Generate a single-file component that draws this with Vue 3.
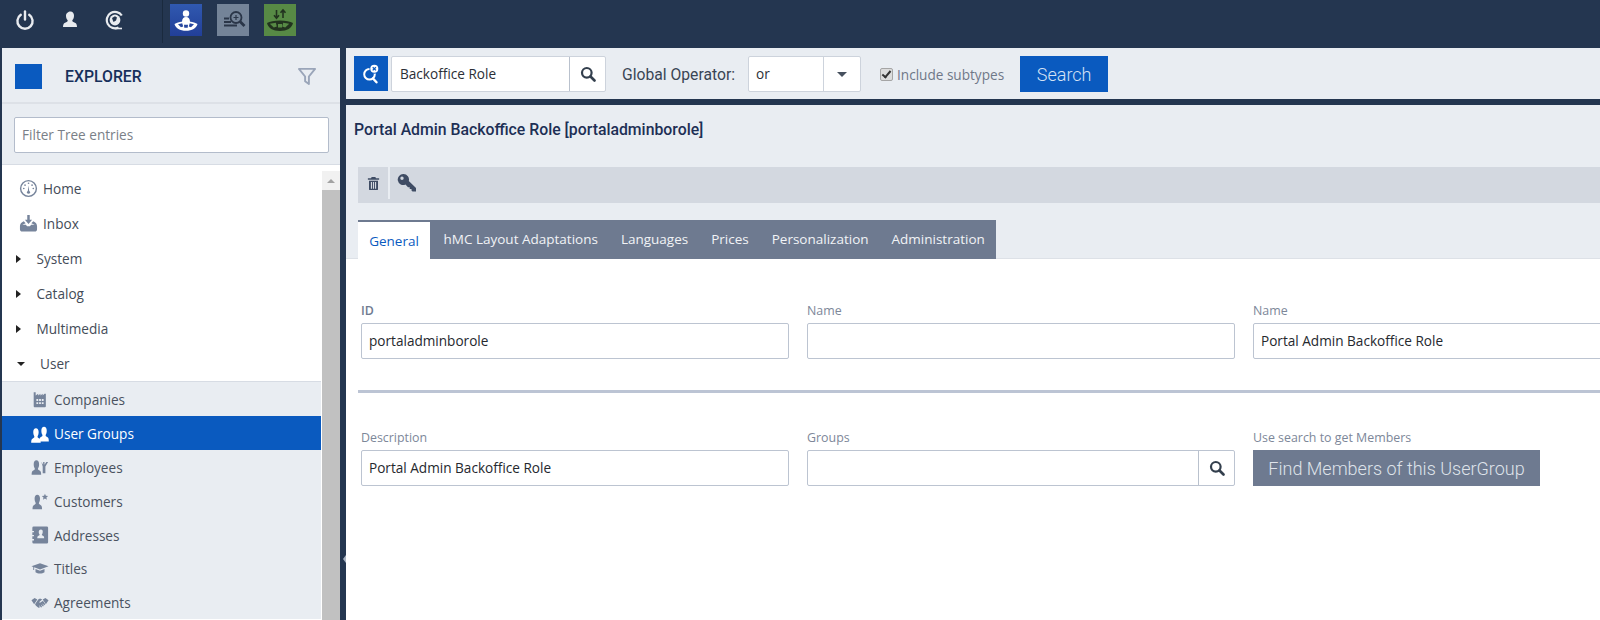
<template>
  <div class="page">
    <header class="topbar">
      <div class="top-actions">
        <svg class="top-icon" viewBox="0 0 20 20" fill="none" stroke="#e8ebef" stroke-width="2.4" stroke-linecap="round">
          <path d="M5.800 4.800a7.600 7.600 0 1 0 8.400 0" />
          <path d="M10 1.500v8" />
        </svg>
        <svg class="top-icon" viewBox="0 0 20 20" fill="#e8ebef">
          <path d="M10.500 1.500c2.200 0 3.500 1.700 3.500 4 0 2-.6 3.500-1.500 4.600-.4.500-.2 1.300.4 1.600l2.500 1.200c1 .5 1.600 2 1.600 4.100H3c0-2.100.6-3.600 1.600-4.100l2.500-1.200c.6-.3.800-1.100.4-1.600C6.600 9 6 7.500 6 5.500c0-2.300 2.300-4 4.500-4z" />
        </svg>
        <svg class="top-icon" viewBox="0 0 20 20" fill="none" stroke="#e8ebef">
          <path d="M14.500 17.500A8.200 8.200 0 1 1 17.800 5.500" stroke-width="2.200" />
          <circle cx="11" cy="10" r="5.400" fill="#e8ebef" stroke="none" />
          <path d="M8 8l3-1.800 2 1.300-1 3-2.500 1.500-.8-2z" fill="#243650" stroke="none" />
          <path d="M11 18.500h7" stroke-width="1.600" />
        </svg>
      </div>
      <div class="perspectives">
        <button class="persp persp-blue">
          <svg viewBox="0 0 32 32" fill="#fff">
            <circle cx="16" cy="9.500" r="3.200" />
            <path d="M12 18c0-3.500 1.500-5 4-5s4 1.500 4 5z" />
            <path d="M4.500 20c3.500-2 7-2.800 11.500-2.800s8 .8 11.500 2.800c-1 4.200-5.500 6.800-11.500 6.800S5.500 24.200 4.500 20zm3.500.3l3 3 2.200-.8-1-3.200zm6 .5l.3 2.900h3.400l.3-2.900zm5.800-1.500l-1 3.200 2.200.8 3-3z" fill-rule="evenodd" />
          </svg>
        </button>
        <button class="persp persp-grey">
          <svg viewBox="0 0 32 32" fill="none" stroke="#2a3648" stroke-width="1.800">
            <circle cx="19" cy="13.500" r="5.500" />
            <path d="M23 17.500l4.500 4.500" stroke-width="2.800" />
            <path d="M16.500 13.500h5M19 11v5" stroke-width="1.200" />
            <path d="M7 14.500h5M7 18h7M7 21.500h13" stroke-width="2" />
          </svg>
        </button>
        <button class="persp persp-green">
          <svg viewBox="0 0 32 32" fill="#22331f">
            <path d="M3 19c3-1.500 7-2.500 13-2.500s10 1 13 2.500c-1 5-6 8-13 8S4 24 3 19zm2.800.8l4 3.700 3-1-1-3.800zm8.200.2v3.500h4V20zm5.200-1.300l-1 3.800 3 1 4-3.700z" fill-rule="evenodd" />
            <path d="M12.500 6v8M10 11.300l2.500 2.900 2.500-2.900M19 14V6M16.500 8.800L19 6l2.500 2.800" fill="none" stroke="#22331f" stroke-width="1.600" />
          </svg>
        </button>
      </div>
    </header>

    <div class="workspace">
      <aside class="sidebar">
        <div class="explorer-head">
          <span class="explorer-logo"></span>
          <span class="explorer-title">EXPLORER</span>
          <svg class="funnel" viewBox="0 0 20 20" fill="none" stroke="#9aa5b9" stroke-width="2" stroke-linejoin="round">
            <path d="M1.500 2h17l-6.500 8v8l-4-3v-5z" />
          </svg>
        </div>
        <div class="filter-row">
          <div class="filter-input">Filter Tree entries</div>
        </div>
        <div class="tree-area">
          <div class="tree">
            <div class="tree-row top-row">
              <svg class="row-icon" viewBox="0 0 20 20" fill="none" stroke="#76849b">
                <circle cx="10" cy="10" r="8.300" stroke-width="1.500" />
                <path d="M10 6.500l.8 7H9.200z" fill="#76849b" stroke="none" />
                <circle cx="10" cy="14" r="1.600" fill="#76849b" stroke="none" />
                <path d="M5 10h.1M6.300 6.500h.1M10 4.500h.1M13.700 6.500h.1M15 10h.1" stroke-width="1.700" stroke-linecap="round" />
              </svg>
              <span>Home</span>
            </div>
            <div class="tree-row top-row">
              <svg class="row-icon" viewBox="0 0 20 20" fill="#76849b">
                <path d="M8.700 1h2.600v5h2.500L10 10.500 6.200 6h2.500z" />
                <path d="M5 7.500l2 2.200-3.500 1.600h3.700L8.500 13h3l1.300-1.700h3.700L13 9.700l2-2.200c2.700 1 4 3 4 5.500v3c0 1.500-1 2.500-2.500 2.500h-13C2 18.500 1 17.500 1 16v-3c0-2.500 1.300-4.500 4-5.500z" />
              </svg>
              <span>Inbox</span>
            </div>
            <div v-for="item in closedNodes" :key="item" class="tree-row node-row">
              <span class="caret-right"></span>
              <span>{{ item }}</span>
            </div>
            <div class="tree-row node-row open-row">
              <span class="caret-down"></span>
              <span>User</span>
            </div>
            <div class="sub-list">
              <div
                v-for="item in userItems"
                :key="item.label"
                class="sub-row"
                :class="{ selected: item.selected }"
              >
                <svg class="sub-icon" viewBox="0 0 20 20" v-html="item.icon"></svg>
                <span>{{ item.label }}</span>
              </div>
            </div>
          </div>
          <div class="scrollbar">
            <div class="scroll-up"><span></span></div>
            <div class="scroll-thumb"></div>
          </div>
        </div>
      </aside>

      <main class="main">
        <div class="searchbar">
          <button class="search-mode">
            <svg viewBox="0 0 20 20" fill="none" stroke="#fff">
              <circle cx="8.500" cy="10.200" r="5.300" stroke-width="2" />
              <path d="M12 14.500l3.500 3.800" stroke-width="2.400" stroke-linecap="round" />
              <circle cx="13.300" cy="4.800" r="4.900" fill="#0a5abf" stroke="none" />
              <circle cx="13.300" cy="4.800" r="4" fill="#fff" stroke="none" />
              <path d="M11.700 3.200l3.200 3.200M14.900 3.200l-3.200 3.200" stroke="#0a5abf" stroke-width="1.300" />
            </svg>
          </button>
          <div class="search-box">
            <span class="search-text">Backoffice Role</span>
            <span class="addon">
              <svg class="glass" viewBox="0 0 16 16" fill="none" stroke="#333f4d">
                <circle cx="6.800" cy="6.800" r="4.800" stroke-width="2.200" />
                <path d="M10.500 10.500l4 4" stroke-width="2.600" stroke-linecap="round" />
              </svg>
            </span>
          </div>
          <span class="operator-label">Global Operator:</span>
          <div class="operator-select">
            <span class="operator-value">or</span>
            <span class="operator-arrow"><span></span></span>
          </div>
          <label class="subtypes">
            <input type="checkbox" checked />
            <span>Include subtypes</span>
          </label>
          <button class="search-btn">Search</button>
        </div>

        <div class="editor">
          <div class="editor-head">
            <h1 class="editor-title">Portal Admin Backoffice Role [portaladminborole]</h1>
            <div class="toolbar">
              <button class="tool-btn">
                <svg viewBox="0 0 16 16" fill="#3f4c64" width="15" height="15">
                  <path d="M6 1h4l.6 1.500H14V4H2V2.500h3.400z" />
                  <path d="M3.200 5h9.600v9a1 1 0 0 1-1 1H4.200a1 1 0 0 1-1-1zm2 1.500v7h1.200v-7zm2.200 0v7h1.200v-7zm2.200 0v7h1.200v-7z" fill-rule="evenodd" />
                </svg>
              </button>
              <button class="tool-btn key-btn">
                <svg viewBox="0 0 20 20" fill="#3f4c64" width="20" height="20">
                  <path d="M6.500 1a5.500 5.500 0 0 1 5.300 7l7.200 7v3.500h-3.500l-1-1v-1.500h-1.800v-1.800h-1.700L8.500 11.500A5.500 5.500 0 1 1 6.500 1zM5 3.500a1.700 1.700 0 1 0 0 3.400 1.700 1.700 0 0 0 0-3.400z" fill-rule="evenodd" />
                </svg>
              </button>
            </div>
          </div>
          <div class="tabs-wrap">
            <div class="tabs">
              <span v-for="tab in tabs" :key="tab" class="tab" :class="{ active: tab === 'General' }">{{ tab }}</span>
            </div>
          </div>

          <div class="form">
            <div class="form-grid">
              <label class="field">
                <span class="field-label strong">ID</span>
                <span class="field-input">portaladminborole</span>
              </label>
              <label class="field">
                <span class="field-label">Name</span>
                <span class="field-input"></span>
              </label>
              <label class="field">
                <span class="field-label">Name</span>
                <span class="field-input">Portal Admin Backoffice Role</span>
              </label>
            </div>
            <div class="divider"></div>
            <div class="form-grid">
              <label class="field">
                <span class="field-label">Description</span>
                <span class="field-input">Portal Admin Backoffice Role</span>
              </label>
              <label class="field">
                <span class="field-label">Groups</span>
                <span class="field-input with-addon">
                  <span class="addon">
                    <svg class="glass" viewBox="0 0 16 16" fill="none" stroke="#333f4d">
                      <circle cx="6.800" cy="6.800" r="4.800" stroke-width="2.200" />
                      <path d="M10.500 10.500l4 4" stroke-width="2.600" stroke-linecap="round" />
                    </svg>
                  </span>
                </span>
              </label>
              <div class="field">
                <span class="field-label">Use search to get Members</span>
                <button class="find-btn">Find Members of this UserGroup</button>
              </div>
            </div>
          </div>
          <span class="collapse-handle"></span>
        </div>
      </main>
    </div>
  </div>
</template>

<script setup>
const closedNodes = ['System', 'Catalog', 'Multimedia'];

const tabs = ['General', 'hMC Layout Adaptations', 'Languages', 'Prices', 'Personalization', 'Administration'];

// same silhouette used by the people icons
const person = 'M6 2.500c1.800 0 3 1.500 3 3.600 0 1.700-.5 3-1.100 3.800-.3.400-.2 1 .2 1.300l1.800 1c1 .5 1.400 1.500 1.400 3.800H.7c0-2.300.4-3.300 1.400-3.800l1.800-1c.4-.3.500-.9.2-1.300C3.500 9.100 3 7.800 3 6.100 3 4 4.200 2.500 6 2.500z';

const userItems = [
  {
    label: 'Companies',
    icon: '<path d="M3 1.500h2.200v3.500l2.800-2v2l2.500-2v2l2.500-2v2l2-2h1.500V17a1 1 0 0 1-1 1H4a1 1 0 0 1-1-1zm3 7.500v2h2V9zm3 0v2h2V9zm3 0v2h2V9zM6 12.500v2h2v-2zm3 0v2h2v-2zm3 0v2h2v-2z" fill-rule="evenodd"/>',
  },
  {
    label: 'User Groups',
    selected: true,
    icon: `<path d="${person}" transform="translate(-.5 .5) scale(1 1.2)"/><path d="${person}" transform="translate(8.500 -1) scale(1 1.2)"/>`,
  },
  {
    label: 'Employees',
    icon: `<path d="${person}" transform="translate(0 -.5) scale(1 1.2)"/><path d="M11.500 4.500l2 3v-3H15v3l2-3h2l-3 5v7.500h-3V9.500z"/>`,
  },
  {
    label: 'Customers',
    icon: `<path d="${person}" transform="translate(1 0) scale(1 1.2)"/><path d="M15.500 2l1 2.300 2.500.2-1.900 1.600.6 2.400-2.200-1.300-2.200 1.300.6-2.400-1.900-1.600 2.500-.2z"/>`,
  },
  {
    label: 'Addresses',
    icon: '<path d="M3 .5h14.500A1.500 1.500 0 0 1 19 2v16a1.500 1.500 0 0 1-1.500 1.500H3A1.500 1.500 0 0 1 1.500 18v-2h1.800v-1.500H1.500v-3h1.800V10H1.500V7h1.800V5.500H1.500V2A1.500 1.500 0 0 1 3 .5zm8 3.500c-1.500 0-2.400 1.200-2.400 2.900 0 1.100.4 2 .9 2.600.2.300.1.600-.2.800l-1.400.8c-.6.300-.9 1-.9 2.400h7.600c0-1.400-.3-2.100-.9-2.400l-1.400-.8c-.3-.2-.4-.5-.2-.8.500-.6.900-1.500.9-2.600C13.400 5.200 12.500 4 11 4z" fill-rule="evenodd"/>',
  },
  {
    label: 'Titles',
    icon: '<path d="M10 3.500l9.500 3.500L10 10.500 3.500 8.100V11H2.500V7.700L.5 7z"/><path d="M5 10l5 1.900 5-1.900v3.500c-1.300 1-3 1.500-5 1.500s-3.700-.5-5-1.500z"/>',
  },
  {
    label: 'Agreements',
    icon: '<path d="M.5 7L4 4.500l3 1.500-3.500 5.500zM19.500 7L16 4.500l-3 1.500 3.500 5.500z"/><path d="M8 6l2-1 2.500 1-3 2.500c-.5.500.3 1.500 1 1l2.800-2 2.500 4-1 1-3-2.500 2.500 3-1 1-2.500-2.700 1.500 3.200-1.200.6-2-3 .7 2.900-1.500.3L5.500 13l-1-1.500z"/>',
  },
];
</script>

<style>
html,
body {
  margin: 0;
  overflow: hidden;
}
</style>

<style scoped>
.page {
  width: 1600px;
  height: 620px;
  overflow: hidden;
  display: flex;
  flex-direction: column;
  background: #243650;
  font-family: 'Open Sans', 'Liberation Sans', sans-serif;
  font-size: 13.6px;
  color: #3c4654;
}

button {
  border: 0;
  padding: 0;
  font-family: inherit;
}

/* top bar */
.topbar {
  height: 48px;
  flex: none;
  display: flex;
}

.top-actions {
  width: 163px;
  height: 43px;
  box-sizing: border-box;
  padding: 10px 0 0 15px;
  display: flex;
  gap: 24.5px;
  border-right: 1px solid #1a2a3e;
}

.top-icon {
  width: 20px;
  height: 20px;
}

.perspectives {
  display: flex;
  gap: 15px;
  padding: 4px 0 0 7px;
}

.persp {
  width: 32px;
  height: 32px;
}

.persp svg {
  width: 32px;
  height: 32px;
  display: block;
}

.persp-blue {
  background: linear-gradient(#3059b0, #223f98);
}

.persp-grey {
  background: #748498;
}

.persp-green {
  background: #578a45;
}

.workspace {
  flex: 1;
  display: flex;
  min-height: 0;
}

/* explorer */
.sidebar {
  width: 338px;
  margin-left: 2px;
  flex: none;
  display: flex;
  flex-direction: column;
  background: #e9edf2;
}

.explorer-head {
  height: 56px;
  box-sizing: border-box;
  display: flex;
  align-items: center;
  padding: 2px 0 0 13px;
  border-bottom: 2px solid #dde1e7;
}

.explorer-logo {
  width: 27px;
  height: 25px;
  background: #0a5abf;
}

.explorer-title {
  margin-left: 23px;
  font-family: Roboto, 'Liberation Sans', sans-serif;
  font-size: 15.8px;
  font-weight: 500;
  color: #17305c;
}

.funnel {
  width: 20px;
  height: 19px;
  margin-left: auto;
  margin-right: 23px;
}

.filter-row {
  height: 61px;
  box-sizing: border-box;
  padding: 13px 11px 0 12px;
  border-bottom: 1px solid #d7dce4;
}

.filter-input {
  height: 36px;
  box-sizing: border-box;
  background: #fff;
  border: 1px solid #b3bccb;
  border-radius: 2px;
  padding: 0 7px;
  line-height: 34px;
  color: #7a7f87;
}

.tree-area {
  flex: 1;
  min-height: 0;
  display: flex;
  background: #fff;
}

.tree {
  width: 319px;
  flex: none;
  overflow: hidden;
  padding-top: 6px;
}

.tree-row {
  height: 35px;
  display: flex;
  align-items: center;
  color: #444c58;
}

.top-row {
  padding-left: 17px;
  gap: 5px;
}

.row-icon {
  width: 19px;
  height: 19px;
}

.node-row {
  padding-left: 14px;
}

.caret-right {
  width: 0;
  height: 0;
  border-left: 5px solid #222;
  border-top: 4px solid transparent;
  border-bottom: 4px solid transparent;
  margin-right: 15.5px;
}

.caret-down {
  width: 0;
  height: 0;
  border-top: 4px solid #222;
  border-left: 4px solid transparent;
  border-right: 4px solid transparent;
  margin-left: 1px;
  margin-right: 15px;
}

.sub-list {
  background: #e9edf2;
  border-top: 1px solid #d7dce4;
}

.sub-row {
  height: 33.8px;
  box-sizing: border-box;
  display: flex;
  align-items: center;
  gap: 5px;
  padding: 2px 0 0 29px;
  color: #4a5260;
}

.sub-row.selected {
  background: #0a5abf;
  color: #fff;
}

.sub-icon {
  width: 18px;
  height: 18px;
  fill: #76849b;
}

.sub-row.selected .sub-icon {
  fill: #fff;
}

.scrollbar {
  width: 18px;
  margin-left: 1px;
  flex: none;
  display: flex;
  flex-direction: column;
  background: #f1f1f1;
  margin-top: 6px;
}

.scroll-up {
  height: 19px;
  display: flex;
  align-items: center;
  justify-content: center;
}

.scroll-up span {
  width: 0;
  height: 0;
  border-bottom: 4px solid #a3a3a3;
  border-left: 4px solid transparent;
  border-right: 4px solid transparent;
}

.scroll-thumb {
  flex: 1;
  background: #c1c1c1;
}

/* search */
.main {
  margin-left: 6px;
  flex: 1;
  min-width: 0;
  display: flex;
  flex-direction: column;
}

.searchbar {
  height: 51px;
  flex: none;
  box-sizing: border-box;
  padding: 8px 0 0 8px;
  display: flex;
  align-items: flex-start;
  background: #e9edf2;
}

.search-mode {
  width: 34px;
  height: 35px;
  background: #0a5abf;
  display: flex;
  align-items: center;
  justify-content: center;
}

.search-mode svg {
  width: 20px;
  height: 20px;
}

.search-box {
  width: 215px;
  height: 36px;
  margin-left: 3px;
  box-sizing: border-box;
  position: relative;
  background: #fff;
  border: 1px solid #cdd3dc;
  border-radius: 2px;
  line-height: 34px;
  color: #2b2f36;
  padding-left: 8px;
}

.addon {
  position: absolute;
  top: 0;
  right: 0;
  bottom: 0;
  width: 35px;
  border-left: 1px solid #b9c1cd;
  display: flex;
  align-items: center;
  justify-content: center;
}

.glass {
  width: 16px;
  height: 16px;
}

.operator-label {
  margin-left: 16px;
  line-height: 38px;
  font-family: Roboto, 'Liberation Sans', sans-serif;
  font-size: 15.7px;
  color: #3a4554;
}

.operator-select {
  width: 113px;
  height: 36px;
  margin-left: 13px;
  box-sizing: border-box;
  display: flex;
  background: #fff;
  border: 1px solid #cdd3dc;
  border-radius: 2px;
  line-height: 34px;
}

.operator-value {
  width: 74px;
  padding-left: 7px;
  box-sizing: border-box;
  color: #2b2f36;
}

.operator-arrow {
  flex: 1;
  border-left: 1px solid #cdd3dc;
  display: flex;
  align-items: center;
  justify-content: center;
}

.operator-arrow span {
  width: 0;
  height: 0;
  border-top: 5px solid #46505e;
  border-left: 5px solid transparent;
  border-right: 5px solid transparent;
}

.subtypes {
  margin-left: 19px;
  height: 36px;
  display: flex;
  align-items: center;
  gap: 4px;
  color: #6f7888;
}

.subtypes input {
  appearance: none;
  position: relative;
  width: 13px;
  height: 13px;
  margin: 0;
  box-sizing: border-box;
  background: #dcdcdc;
  border: 1px solid #a5a5a5;
  border-radius: 2px;
}

.subtypes input::after {
  content: '';
  position: absolute;
  left: 3px;
  top: 0;
  width: 3px;
  height: 7px;
  border: solid #333;
  border-width: 0 2px 2px 0;
  transform: rotate(40deg);
}

.search-btn {
  width: 88px;
  height: 36px;
  margin-left: 16px;
  background: #0a5abf;
  color: #d5e2f5;
  font-family: Roboto, 'Liberation Sans', sans-serif;
  font-weight: 300;
  font-size: 18px;
}

/* editor */
.editor {
  flex: 1;
  margin-top: 6px;
  min-height: 0;
  display: flex;
  flex-direction: column;
  background: #fff;
  position: relative;
}

.editor-head {
  height: 115px;
  flex: none;
  box-sizing: border-box;
  padding: 15px 0 0 8px;
  background: #e9edf2;
}

.editor-title {
  margin: 0;
  font-family: Roboto, 'Liberation Sans', sans-serif;
  font-size: 15.8px;
  font-weight: 500;
  line-height: 19px;
  color: #1d2f55;
}

.toolbar {
  margin: 28px 0 0 4px;
  height: 36px;
  background: #d3d8e0;
  display: flex;
}

.tool-btn {
  width: 32px;
  height: 32px;
  background: #d3d8e0;
  border-right: 2px solid #e9edf2;
  display: flex;
  align-items: center;
  justify-content: center;
}

.key-btn {
  width: 34px;
  border: 0;
}

.tabs-wrap {
  height: 39px;
  flex: none;
  box-sizing: border-box;
  background: #e9edf2;
  padding-left: 12px;
  border-bottom: 1px solid #dde1e7;
}

.tabs {
  width: 638px;
  height: 39px;
  background: #6e7a90;
  display: flex;
  padding-top: 2px;
  box-sizing: border-box;
  align-items: stretch;
}

.tab {
  flex: none;
  padding: 0 11.5px;
  color: #f1f3f6;
  font-size: 13.5px;
  line-height: 35px;
  white-space: nowrap;
}

.tab.active {
  width: 72px;
  box-sizing: border-box;
  padding: 2px 0 0;
  text-align: center;
  background: #fff;
  color: #0a5abf;
  margin-right: 2px;
}

.form {
  padding: 42px 0 0 15px;
}

.form-grid {
  display: grid;
  grid-template-columns: repeat(3, 428px);
  column-gap: 18px;
}

.field {
  display: flex;
  flex-direction: column;
  align-items: stretch;
}

.field-label {
  height: 22px;
  font-size: 12.4px;
  line-height: 20px;
  color: #7d8799;
}

.field-label.strong {
  font-weight: 600;
  color: #6f7b90;
}

.field-input {
  height: 36px;
  position: relative;
  box-sizing: border-box;
  background: #fff;
  border: 1px solid #bcc4d1;
  border-radius: 2px;
  padding: 0 7px;
  line-height: 34px;
  color: #25282e;
}

.divider {
  height: 3px;
  margin: 31px 0 35px -3px;
  background: #bcc4d4;
}

.find-btn {
  align-self: flex-start;
  width: 287px;
  height: 36px;
  background: #6e7a90;
  color: #dfe3ea;
  font-family: Roboto, 'Liberation Sans', sans-serif;
  font-weight: 300;
  font-size: 18px;
}

.collapse-handle {
  position: absolute;
  left: -3px;
  top: 450px;
  width: 0;
  height: 0;
  border-right: 3px solid #a9b3c2;
  border-top: 4px solid transparent;
  border-bottom: 4px solid transparent;
}
</style>
